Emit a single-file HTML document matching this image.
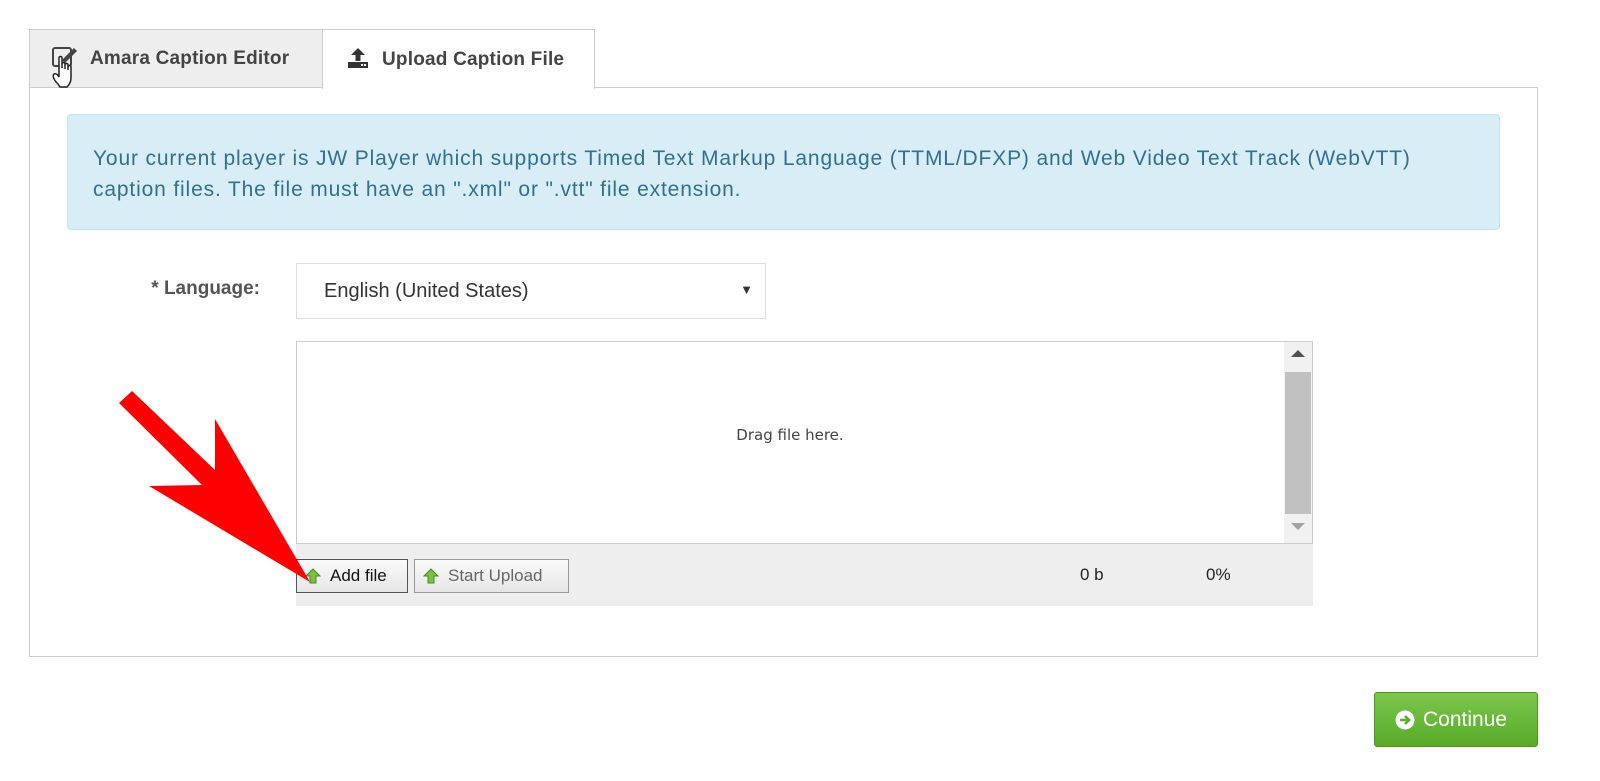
<!DOCTYPE html>
<html><head><style>
body{margin:0;width:1600px;height:781px;background:#fff;font-family:"Liberation Sans",sans-serif;position:relative;overflow:hidden}
.a{position:absolute;box-sizing:border-box}
.tab{font-weight:bold;font-size:19px;color:#444;display:flex;align-items:center}
.btn{border:1px solid #999;background:linear-gradient(#fafafa,#e6e6e6);font-size:17px;display:flex;align-items:center;padding-left:8px}
</style></head><body>
<div class="a" style="left:29px;top:87px;width:1509px;height:570px;border:1px solid #ccc"></div>
<div class="a tab" style="left:29px;top:29px;width:294px;height:59px;background:#eee;border:1px solid #ccc;padding-left:60px;letter-spacing:0.2px">Amara Caption Editor</div>
<svg class="a" style="left:48px;top:44px" width="34" height="46" viewBox="0 0 34 46"><rect x="5" y="4" width="18" height="18" rx="2" fill="none" stroke="#444" stroke-width="2"/><path d="M14 16 L26 4 L29 7 L17 19 Z" fill="#444"/><path d="M10 40 C6 36 4 32 6 30 C8 29 10 31 11 33 L11 14 C11 12 14 12 14 14 L14 24 L14 20 C14 18 17 18 17 20 L17 25 L17 21 C17 19 20 19 20 21 L20 26 L20 23 C20 21 23 21 23 23 L23 34 C23 38 21 41 19 43 L12 43 Z" fill="#fff" stroke="#222" stroke-width="1.5"/></svg>
<div class="a tab" style="left:322px;top:29px;width:273px;height:60px;background:#fff;border:1px solid #ccc;border-bottom:none;padding-left:59px;letter-spacing:0.2px">Upload Caption File</div>
<svg class="a" style="left:347px;top:47px" width="22" height="22" viewBox="0 0 22 22"><path d="M11 1 L18 8 L13.5 8 L13.5 14 L8.5 14 L8.5 8 L4 8 Z" fill="#333"/><rect x="1" y="15" width="20" height="6" fill="#333"/><rect x="14" y="17" width="2" height="2" fill="#fff"/><rect x="17" y="17" width="2" height="2" fill="#fff"/></svg>
<div class="a" style="left:67px;top:114px;width:1433px;height:116px;background:#d9edf7;border:1px solid #bce8f1;border-radius:4px;color:#31708f;font-size:21px;letter-spacing:0.85px;line-height:31px;padding:28px 0 0 25px;white-space:nowrap">Your current player is JW Player which supports Timed Text Markup Language (TTML/DFXP) and Web Video Text Track (WebVTT)<br>caption files. The file must have an ".xml" or ".vtt" file extension.</div>
<div class="a" style="left:100px;top:278px;width:160px;text-align:right;font-weight:bold;font-size:19px;color:#555">* Language:</div>
<div class="a" style="left:296px;top:263px;width:470px;height:56px;border:1px solid #ddd;font-size:20px;color:#333;padding:16px 0 0 27px">English (United States)<span style="position:absolute;right:12px;top:18px;font-size:13px">▼</span></div>
<div class="a" style="left:296px;top:341px;width:1017px;height:203px;border:1px solid #ccc;background:#fff"></div>
<div class="a" style="left:1284px;top:342px;width:28px;height:201px;background:#f1f1f1"></div>
<div class="a" style="left:1285px;top:372px;width:26px;height:142px;background:#c1c1c1"></div>
<div class="a" style="left:1291px;top:350px;width:0;height:0;border:7px solid transparent;border-bottom:7px solid #505050;border-top:none"></div>
<div class="a" style="left:1291px;top:523px;width:0;height:0;border:7px solid transparent;border-top:7px solid #a3a3a3;border-bottom:none"></div>
<div class="a" style="left:296px;top:426px;width:988px;text-align:center;font-family:'DejaVu Sans',sans-serif;font-size:15px;color:#444">Drag file here.</div>
<div class="a" style="left:296px;top:544px;width:1017px;height:62px;background:#eee"></div>
<div class="a btn" style="left:296px;top:559px;width:112px;height:34px;border-color:#555;color:#111"><svg width="16" height="16" viewBox="0 0 16 16"><path d="M8 1 L15 8 L11 8 L11 15 L5 15 L5 8 L1 8 Z" fill="#7ac043" stroke="#4a8a22"/></svg><span style="margin-left:9px">Add file</span></div>
<div class="a btn" style="left:414px;top:559px;width:155px;height:34px;color:#666"><svg width="16" height="16" viewBox="0 0 16 16"><path d="M8 1 L15 8 L11 8 L11 15 L5 15 L5 8 L1 8 Z" fill="#7ac043" stroke="#4a8a22"/></svg><span style="margin-left:9px">Start Upload</span></div>
<div class="a" style="left:1080px;top:565px;font-size:17px;color:#222">0 b</div>
<div class="a" style="left:1206px;top:565px;font-size:17px;color:#222">0%</div>
<svg class="a" style="left:0;top:0" width="400" height="600"><polygon points="132,391 215,470 215,419 310,582 149,486 202,485 119,403" fill="#ff0000"/></svg>
<div class="a" style="left:1374px;top:692px;width:164px;height:55px;border:1px solid #4a9a1a;border-radius:3px;background:linear-gradient(#7cc64c,#58ab29);color:#fff;font-size:21px;display:flex;align-items:center;padding-left:20px"><svg width="20" height="20" viewBox="0 0 20 20"><circle cx="10" cy="10" r="9.5" fill="#fff"/><path d="M5 10 H13 M10 6 L14 10 L10 14" stroke="#5aad2b" stroke-width="2.6" fill="none"/></svg><span style="margin-left:8px">Continue</span></div>
</body></html>
